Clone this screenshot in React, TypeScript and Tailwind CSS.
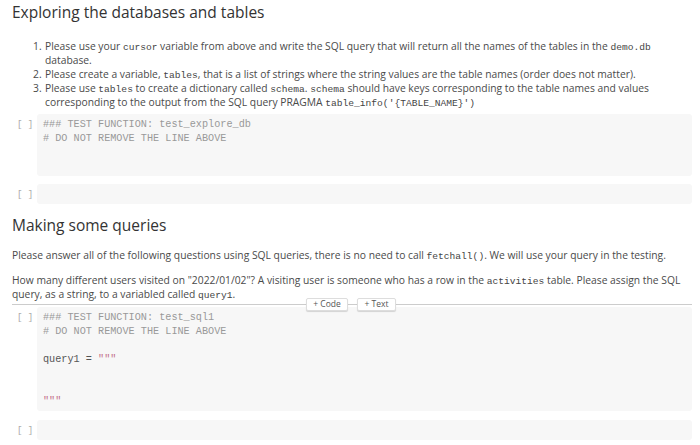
import React from 'react';

const sans = "font-['Open_Sans','Liberation_Sans',sans-serif]";
const mono = "font-['Liberation_Mono','DejaVu_Sans_Mono',monospace]";

const Code: React.FC<{ children: React.ReactNode }> = ({ children }) => (
  <code className={`${mono} text-[9.6px] leading-none text-[#444]`}>{children}</code>
);

const Cell: React.FC<{ lines: React.ReactNode[] }> = ({ lines }) => (
  <div className="flex items-start">
    <div className={`${mono} w-[37px] shrink-0 pl-[17px] pt-[4px] text-[9px] leading-[14px] text-[#aaa]`}>[ ]</div>
    <div className={`${mono} flex-1 bg-[#f7f7f7] rounded-[3px] px-[6px] pt-[4px] pb-[2px] text-[10.2px] leading-[14px] whitespace-pre`}>
      {lines.map((l, i) => (
        <div key={i} className="h-[14px]">{l}</div>
      ))}
    </div>
  </div>
);

const items: React.ReactNode[] = [
  <>
    Please use your <Code>cursor</Code> variable from above and write the SQL query that will return all the names of the tables in the <Code>demo.db</Code> database.
  </>,
  <>
    Please create a variable, <Code>tables</Code>, that is a list of strings where the string values are the table names (order does not matter).
  </>,
  <>
    Please use <Code>tables</Code> to create a dictionary called <Code>schema</Code>. <Code>schema</Code> should have keys corresponding to the table names and values corresponding to the output from the SQL query PRAGMA <Code>table_info('{'{'}TABLE_NAME{'}'}')</Code>
  </>,
];

export default function App() {
  return (
    <div className={`${sans} w-[700px] h-[445px] overflow-hidden bg-white pr-[8px] text-[#4a4a4a]`}>
      <h1 className="pl-[12px] text-[15.5px] leading-[24px] text-[#333]">Exploring the databases and tables</h1>

      <ol className="mt-[15px] pl-[33px] pr-[30px] text-[10.3px] leading-[14px]">
        {items.map((it, i) => (
          <li key={i} className="flex">
            <span className="w-[12px] shrink-0">{i + 1}.</span>
            <span>{it}</span>
          </li>
        ))}
      </ol>

      <div className="mt-[5px] flex flex-col gap-[8px]">
        <Cell
          lines={[
            <span className="text-[#999]">### TEST FUNCTION: test_explore_db</span>,
            <span className="text-[#999]"># DO NOT REMOVE THE LINE ABOVE</span>,
            '',
            '',
          ]}
        />
        <Cell lines={['']} />
      </div>

      <h2 className="mt-[9px] pl-[12px] text-[15.5px] leading-[24px] text-[#333]">Making some queries</h2>

      <div className="pl-[12px] pr-[4px] text-[10.3px] leading-[14px]">
        <p className="mt-[11px]">
          Please answer all of the following questions using SQL queries, there is no need to call <Code>fetchall()</Code>. We will use your query in the testing.
        </p>
        <p className="mt-[11px]">
          How many different users visited on "2022/01/02"? A visiting user is someone who has a row in the <Code>activities</Code> table. Please assign the SQL query, as a string, to a variabled called <Code>query1</Code>.
        </p>
      </div>

      <div className="relative ml-[12px] mt-[3px] h-[3px] border-t border-[#ccc]">
        <div className="absolute left-[294px] -top-[7px] flex gap-[9px] text-[8.5px] text-[#555]">
          <div className="h-[13px] w-[42px] flex items-center justify-center bg-white border border-[#ddd] rounded-[2px] shadow-[0_1px_1px_rgba(0,0,0,0.15)]">+ Code</div>
          <div className="h-[13px] w-[39px] flex items-center justify-center bg-white border border-[#ddd] rounded-[2px] shadow-[0_1px_1px_rgba(0,0,0,0.15)]">+ Text</div>
        </div>
      </div>

      <div className="flex flex-col gap-[9px]">
        <Cell
          lines={[
            <span className="text-[#999]">### TEST FUNCTION: test_sql1</span>,
            <span className="text-[#999]"># DO NOT REMOVE THE LINE ABOVE</span>,
            '',
            <span className="text-[#555]">query1 = <span className="text-[#c4708a]">"""</span></span>,
            '',
            '',
            <span className="text-[#c4708a]">"""</span>,
          ]}
        />
        <Cell lines={['']} />
      </div>
    </div>
  );
}
